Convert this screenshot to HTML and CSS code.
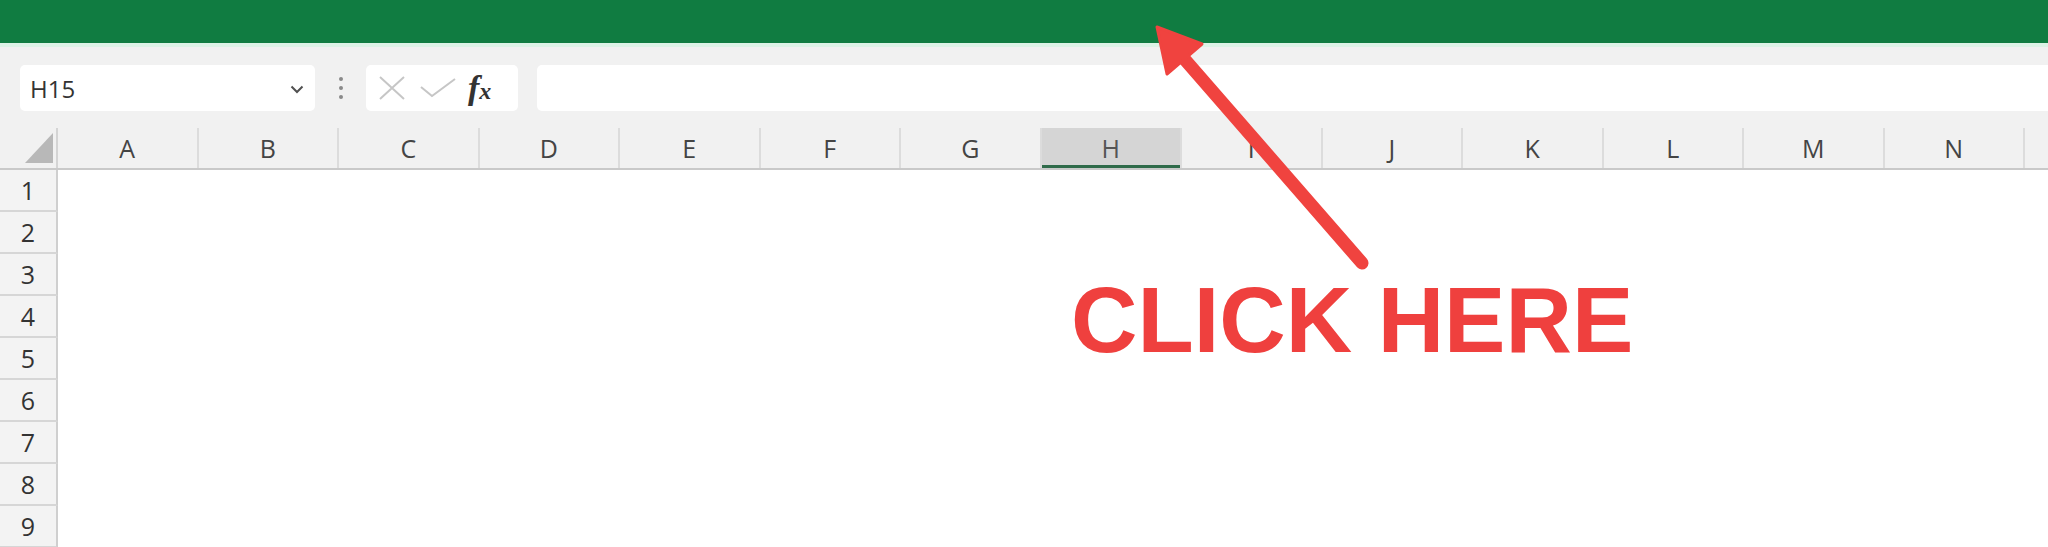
FILE: index.html
```html
<!DOCTYPE html>
<html lang="en">
<head>
    <meta charset="UTF-8">
    <title>Sheet1 - Excel</title>
    <link rel="stylesheet" href="styles.css">
</head>
<body>
    <div class="titlebar"></div>

    <div class="formula-row">
        <div class="namebox">
            <span>H15</span>
            <svg class="chevron" width="14" height="9" viewBox="0 0 14 9">
                <path d="M1.5 1.5 L7 7 L12.5 1.5" fill="none" stroke="#505050" stroke-width="2"/>
            </svg>
        </div>
        <div class="grip">
            <i></i><i></i><i></i>
        </div>
        <div class="fx-box">
            <svg width="28" height="26" viewBox="0 0 28 26">
                <path d="M2 2 L26 24 M26 2 L2 24" stroke="#c6c6c6" stroke-width="2" fill="none"/>
            </svg>
            <svg width="36" height="20" viewBox="0 0 36 20">
                <path d="M1 9 L12 18 L35 1" stroke="#c6c6c6" stroke-width="2" fill="none"/>
            </svg>
            <span class="fx">f<small>x</small></span>
        </div>
        <div class="formula-input"></div>
    </div>

    <div class="sheet">
        <div class="col-headers">
            <div class="corner"><b></b></div>
            <div class="col">A</div>
            <div class="col">B</div>
            <div class="col">C</div>
            <div class="col">D</div>
            <div class="col">E</div>
            <div class="col">F</div>
            <div class="col">G</div>
            <div class="col selected">H</div>
            <div class="col">I</div>
            <div class="col">J</div>
            <div class="col">K</div>
            <div class="col">L</div>
            <div class="col">M</div>
            <div class="col">N</div>
            <div class="col"></div>
        </div>
        <div class="row"><div class="row-num">1</div><div class="cells"></div></div>
        <div class="row"><div class="row-num">2</div><div class="cells"></div></div>
        <div class="row"><div class="row-num">3</div><div class="cells"></div></div>
        <div class="row"><div class="row-num">4</div><div class="cells"></div></div>
        <div class="row"><div class="row-num">5</div><div class="cells"></div></div>
        <div class="row"><div class="row-num">6</div><div class="cells"></div></div>
        <div class="row"><div class="row-num">7</div><div class="cells"></div></div>
        <div class="row"><div class="row-num">8</div><div class="cells"></div></div>
        <div class="row"><div class="row-num">9</div><div class="cells"></div></div>
    </div>

    <!-- red annotation on top of the sheet -->
    <svg class="arrow" width="2048" height="547" viewBox="0 0 2048 547">
        <line x1="1180" y1="54" x2="1362" y2="263" stroke="#f0433f" stroke-width="13" stroke-linecap="round"/>
        <polygon points="1157,27 1167,74 1202,44" fill="#f0433f" stroke="#f0433f" stroke-width="3" stroke-linejoin="round"/>
    </svg>
    <div class="callout">CLICK HERE</div>
</body>
</html>
```

FILE: styles.css
```css
body {
    margin: 0;
    width: 2048px;
    height: 547px;
    overflow: hidden;
    position: relative;
    background: white;
    font-family: 'Open Sans', 'Noto Sans', sans-serif;
    color: #444;
}
.titlebar {
    height: 43px;
    background-color: #107c41;
    border-bottom: 4px solid #dcf3e6;
}
.formula-row {
    height: 81px;
    background-color: #f1f1f1;
    display: flex;
    align-items: flex-start;
    padding-top: 18px;
    box-sizing: border-box;
}
.namebox {
    margin-left: 20px;
    width: 295px;
    height: 46px;
    background: white;
    border-radius: 5px;
    display: flex;
    align-items: center;
    justify-content: space-between;
    padding: 0 11px 0 10px;
    box-sizing: border-box;
    font-size: 24px;
    color: #333;
}
.chevron {
    margin-top: 2px;
}
.grip {
    width: 51px;
    height: 46px;
    display: flex;
    flex-direction: column;
    align-items: center;
    justify-content: center;
    gap: 5px;
}
.grip i {
    width: 4px;
    height: 4px;
    border-radius: 50%;
    background: #8a8a8a;
}
.fx-box {
    width: 152px;
    height: 46px;
    background: white;
    border-radius: 5px;
    display: flex;
    align-items: center;
    padding-left: 12px;
    gap: 14px;
    box-sizing: border-box;
}
.fx {
    font-family: 'Liberation Serif', serif;
    font-style: italic;
    font-weight: bold;
    font-size: 34px;
    color: #333;
    line-height: 1;
    margin-left: -2px;
}
.fx small {
    font-size: 24px;
}
.formula-input {
    margin-left: 19px;
    flex: 1;
    height: 46px;
    background: white;
    border-radius: 5px 0 0 5px;
}
.col-headers {
    display: grid;
    grid-template-columns: 58px repeat(15, 140.5px);
    height: 40px;
    background-color: #f1f1f1;
    border-bottom: 2px solid #c9c9c9;
}
.corner {
    border-right: 2px solid #d4d4d4;
    position: relative;
}
.corner b {
    position: absolute;
    left: 25px;
    top: 5px;
    width: 0;
    height: 0;
    border-left: 28px solid transparent;
    border-bottom: 30px solid #b8b8b8;
}
.col {
    display: flex;
    align-items: center;
    justify-content: center;
    font-size: 25px;
    color: #444;
    border-right: 2px solid #dcdcdc;
}
.col.selected {
    background-color: #d5d5d5;
    color: #555;
    box-shadow: inset 0 -3px 0 #2f6b4a;
}
.row {
    display: flex;
    height: 42px;
}
.row-num {
    width: 58px;
    background-color: #f3f3f3;
    border-right: 2px solid #cfcfcf;
    border-bottom: 2px solid #d6d6d6;
    box-sizing: border-box;
    display: flex;
    align-items: center;
    justify-content: center;
    font-size: 25px;
    color: #333;
}
.cells {
    flex: 1;
}
.arrow {
    position: absolute;
    left: 0;
    top: 0;
}
.callout {
    position: absolute;
    left: 1071px;
    top: 274px;
    font-family: 'Liberation Sans', Arial, sans-serif;
    font-weight: bold;
    font-size: 92px;
    line-height: 1;
    color: #ef403e;
    white-space: nowrap;
}
```
